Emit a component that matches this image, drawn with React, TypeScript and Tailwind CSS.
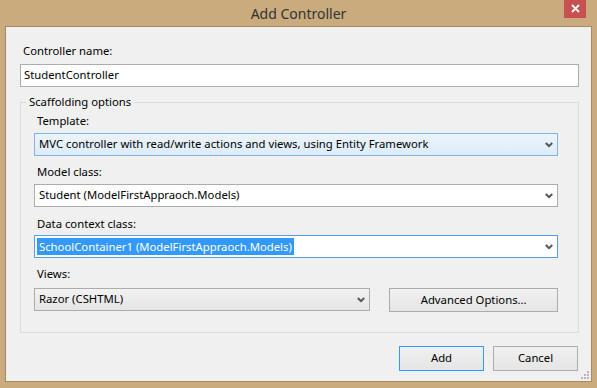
import React from "react";

const Chevron = () => (
  <svg width="8" height="6" viewBox="0 0 8 6" className="shrink-0">
    <path d="M0.8 1 L4 4.2 L7.2 1" fill="none" stroke="#555" strokeWidth="2" />
  </svg>
);

const Select = ({
  value,
  className,
  selected,
}: {
  value: string;
  className: string;
  selected?: boolean;
}) => (
  <div className={`h-[23px] flex items-center justify-between pl-[2px] pr-[4px] border ${className}`}>
    {selected ? (
      <span className="bg-[#3399ff] text-white leading-[17px] px-[2px]">{value}</span>
    ) : (
      <span className="px-[2px]">{value}</span>
    )}
    <Chevron />
  </div>
);

const App = () => {
  return (
    <div className="w-[597px] h-[388px] bg-[#c9ab7d] flex flex-col font-['Noto_Sans',sans-serif] text-[11.3px] text-black">
      {/* title bar */}
      <div className="relative h-[27px] flex items-center justify-center border-b border-[#a98a5e] mx-[5px]">
        <span className="text-[14px] text-[#333] pt-[1px]">Add Controller</span>
        <div className="absolute right-[6px] top-[-1px] w-[22px] h-[19px] bg-[#c75050] flex items-center justify-center">
          <svg width="9" height="9" viewBox="0 0 9 9">
            <path d="M1 1 L8 8 M8 1 L1 8" stroke="#fff" strokeWidth="1.8" />
          </svg>
        </div>
      </div>

      {/* client area */}
      <div className="flex-1 mx-[5px] mb-[6px] bg-[#f0f0f0] border-x border-b border-[#a98a5e] pl-[14px] pr-[12px] pt-[16px] relative">
        <div className="pl-[3px] leading-[16px]">Controller name:</div>
        <div className="mt-[5px] h-[23px] bg-white border border-[#abadb3] flex items-center pl-[3px]">
          StudentController
        </div>

        {/* scaffolding options group */}
        <div className="relative mt-[15px] border border-[#dcdcdc] pl-[13px] pr-[20px] pt-[10px] pb-[20px]">
          <span className="absolute left-[5px] top-[-8px] px-[3px] leading-[14px] bg-[#f0f0f0]">
            Scaffolding options
          </span>

          <div className="pl-[3px] leading-[16px]">Template:</div>
          <Select
            className="mt-[4px] border-[#7eb4ea] bg-gradient-to-b from-[#ecf4fc] to-[#dcecfc]"
            value="MVC controller with read/write actions and views, using Entity Framework"
          />

          <div className="pl-[3px] mt-[8px] leading-[16px]">Model class:</div>
          <Select className="mt-[4px] border-[#acacac] bg-white" value="Student (ModelFirstAppraoch.Models)" />

          <div className="pl-[3px] mt-[9px] leading-[16px]">Data context class:</div>
          <Select
            className="mt-[3px] border-[#569de5] bg-white"
            value="SchoolContainer1 (ModelFirstAppraoch.Models)"
            selected
          />

          <div className="pl-[3px] mt-[8px] leading-[16px]">Views:</div>
          <div className="mt-[6px] flex gap-[19px]">
            <div className="w-[337px]">
              <Select
                className="border-[#acacac] bg-gradient-to-b from-[#f2f2f2] to-[#e5e5e5]"
                value="Razor (CSHTML)"
              />
            </div>
            <div className="w-[169px] h-[24px] border border-[#acacac] bg-gradient-to-b from-[#f0f0f0] to-[#e5e5e5] flex items-center justify-center">
              Advanced Options...
            </div>
          </div>
        </div>

        <div className="mt-[13px] flex justify-end gap-[9px] pr-[1px]">
          <div className="w-[85px] h-[25px] border border-[#3399ff] bg-gradient-to-b from-[#f0f0f0] to-[#e5e5e5] flex items-center justify-center">
            Add
          </div>
          <div className="w-[85px] h-[25px] border border-[#acacac] bg-gradient-to-b from-[#f0f0f0] to-[#e5e5e5] flex items-center justify-center">
            Cancel
          </div>
        </div>

        {/* resize grip */}
        <svg width="9" height="9" viewBox="0 0 9 9" className="absolute right-[1px] bottom-[1px]">
          <g fill="#b8b8b8">
            <rect x="6" y="0" width="2" height="2" />
            <rect x="3" y="3" width="2" height="2" />
            <rect x="6" y="3" width="2" height="2" />
            <rect x="0" y="6" width="2" height="2" />
            <rect x="3" y="6" width="2" height="2" />
            <rect x="6" y="6" width="2" height="2" />
          </g>
        </svg>
      </div>
    </div>
  );
};

export default App;
